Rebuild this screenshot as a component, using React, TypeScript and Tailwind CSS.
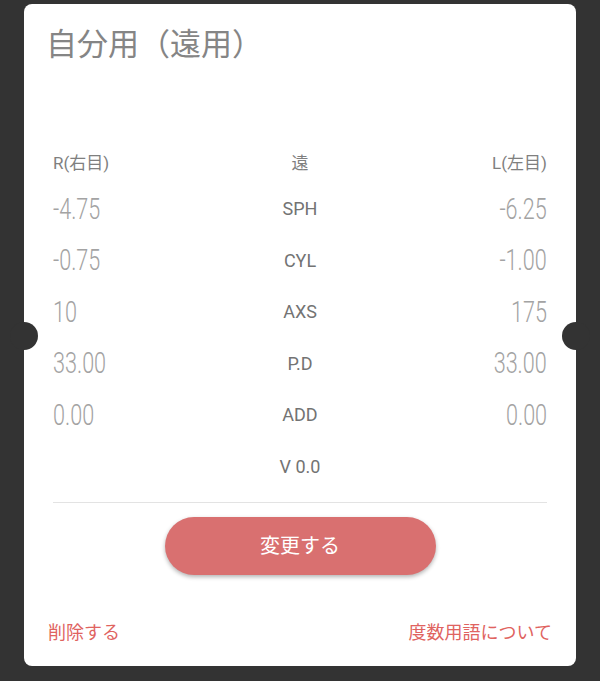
import React from "react";

const rows = [
  { r: "-4.75", m: "SPH", l: "-6.25" },
  { r: "-0.75", m: "CYL", l: "-1.00" },
  { r: "10", m: "AXS", l: "175" },
  { r: "33.00", m: "P.D", l: "33.00" },
  { r: "0.00", m: "ADD", l: "0.00" },
];

const font = { fontFamily: 'Roboto, "Noto Sans CJK JP", sans-serif' };

function Num({ v, right }: { v: string; right?: boolean }) {
  return (
    <div className={`flex-1 flex ${right ? "justify-end" : "justify-start"}`}>
      <span
        className={`inline-block text-[30px] font-light text-[#a3a3a3] leading-none scale-x-[0.72] ${right ? "origin-right" : "origin-left"}`}
      >
        {v}
      </span>
    </div>
  );
}

export default function App() {
  return (
    <div className="w-[600px] h-[681px] bg-[#333333] pt-1 overflow-hidden" style={font}>
      <div className="relative mx-6 h-[662px] bg-white rounded-lg flex flex-col">
        <div className="absolute left-[-14px] top-[318px] w-7 h-7 rounded-full bg-[#333333]" />
        <div className="absolute right-[-14px] top-[318px] w-7 h-7 rounded-full bg-[#333333]" />

        <div className="pl-[22px] pt-[22px] text-[31px] leading-[38px] text-[#858585]">自分用（遠用）</div>

        <div className="px-[29px] mt-[88px]">
          <div className="flex items-center h-[24px] text-[17px] text-[#7f7f7f]">
            <div className="flex-1">R(右目)</div>
            <div className="w-[120px] text-center">遠</div>
            <div className="flex-1 text-right">L(左目)</div>
          </div>
          <div className="h-[7px]" />
          {rows.map((row) => (
            <div key={row.m} className="flex items-center h-[51.5px]">
              <Num v={row.r} />
              <div className="w-[120px] text-center text-[18px] text-[#737373]">{row.m}</div>
              <Num v={row.l} right />
            </div>
          ))}
          <div className="flex items-center justify-center h-[51.5px] text-[18px] text-[#737373]">V 0.0</div>
          <div className="mt-[10px] border-t border-[#e3e3e3]" />
        </div>

        <div className="flex justify-center mt-[14px]">
          <button className="w-[271px] h-[58px] rounded-full bg-[#d97070] text-white text-[20px] shadow-[0_2px_4px_rgba(0,0,0,0.3)]">
            変更する
          </button>
        </div>

        <div className="flex justify-between items-center pl-6 pr-6 mt-[44px] text-[18px] text-[#e0635f]">
          <span>削除する</span>
          <span>度数用語について</span>
        </div>
      </div>
    </div>
  );
}
